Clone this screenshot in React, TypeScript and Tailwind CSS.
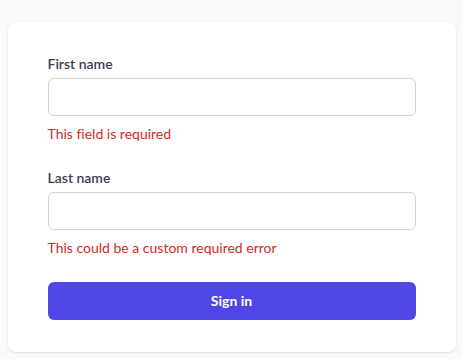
import React from 'react';

const Field = ({ id, label, error }: { id: string; label: string; error: string }) => (
    <div>
        <label htmlFor={id} className="block text-sm font-semibold leading-5 text-[#374151]">
            {label}
        </label>
        <input
            id={id}
            type="text"
            className="mt-1 block h-[38px] w-full rounded-md border border-[#d1d5db] bg-white px-3 text-sm outline-none"
        />
        <p className="mt-2 text-sm leading-5 text-[#dc2626]">{error}</p>
    </div>
);

export default function App() {
    return (
        <div className="min-h-screen bg-[#f9fafb] pt-[22px] font-['Lato',sans-serif] [font-variant-ligatures:none]">
            <div className="mx-auto w-full max-w-md rounded-lg bg-white px-10 py-8 shadow">
                <form className="flex flex-col gap-6" onSubmit={e => e.preventDefault()}>
                    <Field id="first-name" label="First name" error="This field is required" />
                    <Field id="last-name" label="Last name" error="This could be a custom required error" />
                    <button
                        type="submit"
                        className="h-[38px] w-full rounded-md bg-[#4f46e5] text-sm font-bold text-white"
                    >
                        Sign in
                    </button>
                </form>
            </div>
        </div>
    );
}
